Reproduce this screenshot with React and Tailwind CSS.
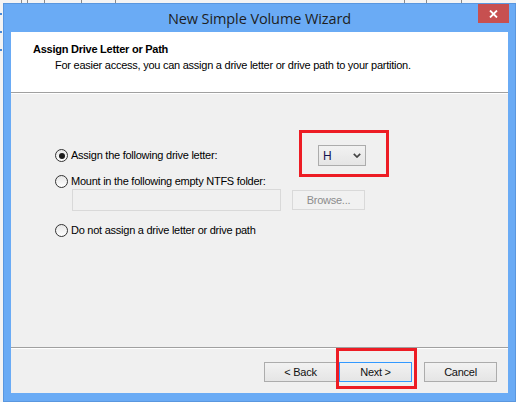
import React from "react";

function Radio({ checked }) {
  return (
    <span className="w-[13px] h-[13px] shrink-0 rounded-full border border-[#333333] bg-gradient-to-b from-[#e6e6e6] to-white flex items-center justify-center">
      {checked && <span className="w-[6px] h-[6px] rounded-full bg-[#1a1a1a]" />}
    </span>
  );
}

function Button({ children, focused }) {
  return (
    <div
      className={
        "w-[73px] h-[20px] flex items-center justify-center text-[11px] text-[#111] bg-gradient-to-b from-[#f2f2f2] to-[#e5e5e5] border " +
        (focused ? "border-[#3399ff]" : "border-[#acacac]")
      }
    >
      {children}
    </div>
  );
}

export default function App() {
  return (
    <div
      className="w-[516px] h-[402px] overflow-hidden bg-[#f6f6f6] flex flex-col"
      style={{ fontFamily: '"Liberation Sans", Arial, sans-serif' }}
    >
      {/* background window strip on top */}
      <div className="h-[3px] shrink-0 flex bg-[#f4f4f4]">
        <div className="w-[22px] border-r border-[#8a8a8a]" />
        <div className="w-[6px] border-r border-[#8a8a8a]" />
        <div className="w-[17px] border-r border-[#8a8a8a]" />
        <div className="w-[37px] border-r border-[#8a8a8a]" />
        <div className="w-[34px] border-r border-[#8a8a8a]" />
        <div className="w-[289px] border-r border-[#8a8a8a]" />
        <div className="w-[22px] border-r border-[#8a8a8a]" />
        <div className="w-[35px] border-r border-[#8a8a8a]" />
      </div>
      <div className="flex flex-1 min-h-0">
        <div className="w-[3px] shrink-0 bg-[#f4f4f4] flex flex-col items-start gap-[16px] pt-[10px]">
          <div className="w-[2px] h-[2px] bg-[#4a8ad8]" />
          <div className="w-[2px] h-[2px] bg-[#4a8ad8]" />
          <div className="w-[2px] h-[2px] bg-[#4a8ad8]" />
        </div>
        {/* window */}
        <div className="w-[513px] h-[399px] shrink-0 bg-[#6aabf5] border border-[#5a97df] flex flex-col">
          {/* title bar */}
          <div className="h-[28px] shrink-0 grid grid-cols-[37px_1fr_37px]">
            <div />
            <div
              className="flex items-center justify-center text-[14.5px] tracking-[-0.1px] text-[#1e1e1e] pt-[1px]"
              style={{ fontFamily: '"Open Sans", "Noto Sans", sans-serif' }}
            >
              New Simple Volume Wizard
            </div>
            <div className="flex items-start">
              <div className="w-[31px] h-[19px] bg-[#c75050] flex items-center justify-center">
                <svg width="9" height="8" viewBox="0 0 9 8">
                  <path d="M1 0.5 L8 7.5 M8 0.5 L1 7.5" stroke="white" strokeWidth="1.8" fill="none" />
                </svg>
              </div>
            </div>
          </div>
          {/* client area */}
          <div className="mx-[7px] w-[497px] h-[361px] shrink-0 bg-[#f0f0f0] flex flex-col text-[11px] tracking-[-0.25px] text-black">
            <div className="h-[60px] shrink-0 bg-white pt-[11px] pl-[22px]">
              <div className="font-bold leading-[13px]">Assign Drive Letter or Path</div>
              <div className="ml-[22px] mt-[3px] leading-[13px]">
                For easier access, you can assign a drive letter or drive path to your partition.
              </div>
            </div>
            <div className="h-px bg-[#a0a0a0] shrink-0" />
            <div className="h-px bg-white shrink-0" />
            {/* body */}
            <div className="h-[253px] shrink-0 pl-[44px] pt-[51px] flex flex-col">
              <div className="h-[21px] flex items-center">
                <div className="w-[263px] flex items-center gap-[3px]">
                  <Radio checked />
                  <span>Assign the following drive letter:</span>
                </div>
                <div className="relative w-[48px] h-[21px] border border-[#acacac] bg-gradient-to-b from-[#f2f2f2] to-[#e5e5e5] flex items-center justify-between pl-[4px] pr-[4px]">
                  <span className="text-[12px] text-[#141450]">H</span>
                  <svg width="8" height="5" viewBox="0 0 8 5">
                    <path d="M0.8 0.8 L4 4 L7.2 0.8" stroke="#444" strokeWidth="1.7" fill="none" />
                  </svg>
                  <span className="absolute -left-[20px] -top-[16px] -right-[24px] -bottom-[12px] border-[3px] border-[#ed1c24] pointer-events-none" />
                </div>
              </div>
              <div className="mt-[7px] h-[16px] flex items-center gap-[3px]">
                <Radio />
                <span>Mount in the following empty NTFS folder:</span>
              </div>
              <div className="ml-[17px] flex items-center">
                <div className="w-[209px] h-[22px] border border-[#d9d9d9] bg-[#f0f0f0]" />
                <div className="ml-[11px] w-[73px] h-[20px] border border-[#d9d9d9] bg-[#f1f1f1] flex items-center justify-center text-[#8c8c8c]">
                  Browse...
                </div>
              </div>
              <div className="mt-[11px] h-[16px] flex items-center gap-[3px]">
                <Radio />
                <span>Do not assign a drive letter or drive path</span>
              </div>
            </div>
            <div className="h-px bg-[#a0a0a0] shrink-0" />
            <div className="h-px bg-white shrink-0" />
            {/* footer */}
            <div className="flex-1 flex justify-end items-start pt-[13px] pr-[11px]">
              <Button>&lt; Back</Button>
              <div className="relative ml-[2px]">
                <Button focused>Next &gt;</Button>
                <span className="absolute -left-[3px] -top-[14px] -right-[5px] -bottom-[7px] border-[3px] border-[#ed1c24] pointer-events-none" />
              </div>
              <div className="ml-[12px]">
                <Button>Cancel</Button>
              </div>
            </div>
          </div>
        </div>
      </div>
    </div>
  );
}
